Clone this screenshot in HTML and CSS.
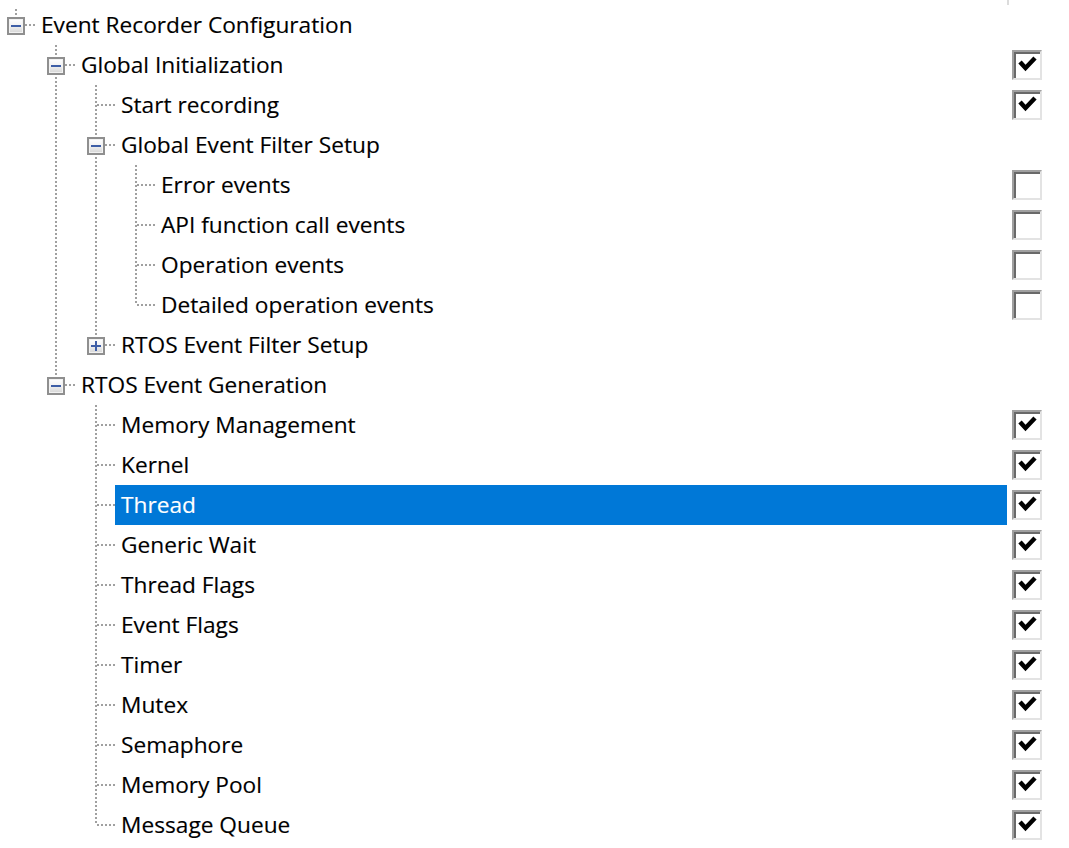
FILE: index.html
```html
<!DOCTYPE html>
<html>
<head>
<meta charset="utf-8">
<link rel="stylesheet" href="styles.css">
</head>
<body>
<div class="view">
  <div class="row top"><div class="tree"></div><div class="check"></div></div>

  <div class="row">
    <div class="tree">
      <div class="node up"><span class="exp minus"></span></div>
      <div class="label">Event Recorder Configuration</div>
    </div>
    <div class="check"></div>
  </div>

  <div class="row">
    <div class="tree">
      <div class="guide"></div>
      <div class="node mid"><span class="exp minus"></span></div>
      <div class="label">Global Initialization</div>
    </div>
    <div class="check"><span class="cb on"><svg viewBox="0 0 30 30"><path d="M8 12 L13.5 18 L23 8"/></svg></span></div>
  </div>

  <div class="row">
    <div class="tree">
      <div class="guide"></div><div class="guide line"></div>
      <div class="node mid"></div>
      <div class="label">Start recording</div>
    </div>
    <div class="check"><span class="cb on"><svg viewBox="0 0 30 30"><path d="M8 12 L13.5 18 L23 8"/></svg></span></div>
  </div>

  <div class="row">
    <div class="tree">
      <div class="guide"></div><div class="guide line"></div>
      <div class="node mid"><span class="exp minus"></span></div>
      <div class="label">Global Event Filter Setup</div>
    </div>
    <div class="check"></div>
  </div>

  <div class="row">
    <div class="tree">
      <div class="guide"></div><div class="guide line"></div><div class="guide line"></div>
      <div class="node mid"></div>
      <div class="label">Error events</div>
    </div>
    <div class="check"><span class="cb"></span></div>
  </div>

  <div class="row">
    <div class="tree">
      <div class="guide"></div><div class="guide line"></div><div class="guide line"></div>
      <div class="node mid"></div>
      <div class="label">API function call events</div>
    </div>
    <div class="check"><span class="cb"></span></div>
  </div>

  <div class="row">
    <div class="tree">
      <div class="guide"></div><div class="guide line"></div><div class="guide line"></div>
      <div class="node mid"></div>
      <div class="label">Operation events</div>
    </div>
    <div class="check"><span class="cb"></span></div>
  </div>

  <div class="row">
    <div class="tree">
      <div class="guide"></div><div class="guide line"></div><div class="guide line"></div>
      <div class="node last"></div>
      <div class="label">Detailed operation events</div>
    </div>
    <div class="check"><span class="cb"></span></div>
  </div>

  <div class="row">
    <div class="tree">
      <div class="guide"></div><div class="guide line"></div>
      <div class="node last"><span class="exp plus"></span></div>
      <div class="label">RTOS Event Filter Setup</div>
    </div>
    <div class="check"></div>
  </div>

  <div class="row">
    <div class="tree">
      <div class="guide"></div>
      <div class="node last"><span class="exp minus"></span></div>
      <div class="label">RTOS Event Generation</div>
    </div>
    <div class="check"></div>
  </div>

  <div class="row">
    <div class="tree">
      <div class="guide"></div><div class="guide"></div>
      <div class="node mid"></div>
      <div class="label">Memory Management</div>
    </div>
    <div class="check"><span class="cb on"><svg viewBox="0 0 30 30"><path d="M8 12 L13.5 18 L23 8"/></svg></span></div>
  </div>

  <div class="row">
    <div class="tree">
      <div class="guide"></div><div class="guide"></div>
      <div class="node mid"></div>
      <div class="label">Kernel</div>
    </div>
    <div class="check"><span class="cb on"><svg viewBox="0 0 30 30"><path d="M8 12 L13.5 18 L23 8"/></svg></span></div>
  </div>

  <div class="row">
    <div class="tree">
      <div class="guide"></div><div class="guide"></div>
      <div class="node mid"></div>
      <div class="label sel">Thread</div>
    </div>
    <div class="check"><span class="cb on"><svg viewBox="0 0 30 30"><path d="M8 12 L13.5 18 L23 8"/></svg></span></div>
  </div>

  <div class="row">
    <div class="tree">
      <div class="guide"></div><div class="guide"></div>
      <div class="node mid"></div>
      <div class="label">Generic Wait</div>
    </div>
    <div class="check"><span class="cb on"><svg viewBox="0 0 30 30"><path d="M8 12 L13.5 18 L23 8"/></svg></span></div>
  </div>

  <div class="row">
    <div class="tree">
      <div class="guide"></div><div class="guide"></div>
      <div class="node mid"></div>
      <div class="label">Thread Flags</div>
    </div>
    <div class="check"><span class="cb on"><svg viewBox="0 0 30 30"><path d="M8 12 L13.5 18 L23 8"/></svg></span></div>
  </div>

  <div class="row">
    <div class="tree">
      <div class="guide"></div><div class="guide"></div>
      <div class="node mid"></div>
      <div class="label">Event Flags</div>
    </div>
    <div class="check"><span class="cb on"><svg viewBox="0 0 30 30"><path d="M8 12 L13.5 18 L23 8"/></svg></span></div>
  </div>

  <div class="row">
    <div class="tree">
      <div class="guide"></div><div class="guide"></div>
      <div class="node mid"></div>
      <div class="label">Timer</div>
    </div>
    <div class="check"><span class="cb on"><svg viewBox="0 0 30 30"><path d="M8 12 L13.5 18 L23 8"/></svg></span></div>
  </div>

  <div class="row">
    <div class="tree">
      <div class="guide"></div><div class="guide"></div>
      <div class="node mid"></div>
      <div class="label">Mutex</div>
    </div>
    <div class="check"><span class="cb on"><svg viewBox="0 0 30 30"><path d="M8 12 L13.5 18 L23 8"/></svg></span></div>
  </div>

  <div class="row">
    <div class="tree">
      <div class="guide"></div><div class="guide"></div>
      <div class="node mid"></div>
      <div class="label">Semaphore</div>
    </div>
    <div class="check"><span class="cb on"><svg viewBox="0 0 30 30"><path d="M8 12 L13.5 18 L23 8"/></svg></span></div>
  </div>

  <div class="row">
    <div class="tree">
      <div class="guide"></div><div class="guide"></div>
      <div class="node mid"></div>
      <div class="label">Memory Pool</div>
    </div>
    <div class="check"><span class="cb on"><svg viewBox="0 0 30 30"><path d="M8 12 L13.5 18 L23 8"/></svg></span></div>
  </div>

  <div class="row">
    <div class="tree">
      <div class="guide"></div><div class="guide"></div>
      <div class="node last"></div>
      <div class="label">Message Queue</div>
    </div>
    <div class="check"><span class="cb on"><svg viewBox="0 0 30 30"><path d="M8 12 L13.5 18 L23 8"/></svg></span></div>
  </div>
</div>
</body>
</html>
```

FILE: styles.css
```css
html, body {
  margin: 0;
  padding: 0;
  background: #ffffff;
}

.view {
  width: 1069px;
  font-family: "Open Sans", "Noto Sans", "DejaVu Sans", sans-serif;
  font-size: 22.7px;
  color: #000000;
}

.row {
  display: flex;
  height: 40px;
}

.row.top {
  height: 5px;
}

.row.top .check {
  box-shadow: inset 2px 0 0 #dcdcdc;
}

.tree {
  width: 1007px;
  display: flex;
  flex: none;
}

.check {
  width: 62px;
  flex: none;
  display: flex;
  align-items: center;
}

.guide {
  width: 40px;
  flex: none;
}

.guide.line {
  background-image: repeating-linear-gradient(to bottom, #a0a0a0 0 2px, transparent 2px 4px);
  background-repeat: no-repeat;
  background-size: 2px 100%;
  background-position: 15px 0;
}

.node {
  width: 35px;
  flex: none;
  background-repeat: no-repeat;
  background-image:
    repeating-linear-gradient(to bottom, #a0a0a0 0 2px, transparent 2px 4px),
    repeating-linear-gradient(to right, #a0a0a0 0 2px, transparent 2px 4px);
  background-position: 15px 0, 17px 19px;
  background-size: 2px 100%, 18px 2px;
}

.node.last {
  background-size: 2px 20px, 18px 2px;
}

.node.up {
  background-position: 15px 4px, 17px 19px;
  background-size: 2px 12px, 18px 2px;
}

.exp {
  display: block;
  position: relative;
  box-sizing: border-box;
  width: 18px;
  height: 18px;
  margin: 12px 0 0 7px;
  border: 2px solid #8f8f8f;
  background: linear-gradient(to bottom, #ffffff 0%, #f4f4f4 40%, #d6d6d6 100%);
  box-shadow: inset 0 0 0 1px #f2f2f2;
}

.exp::before {
  content: "";
  position: absolute;
  left: 2px;
  top: 6px;
  width: 10px;
  height: 2px;
  background: #3e5ea6;
}

.exp.plus::after {
  content: "";
  position: absolute;
  left: 6px;
  top: 2px;
  width: 2px;
  height: 10px;
  background: #3e5ea6;
}

.label {
  flex: 1;
  height: 40px;
  line-height: 40px;
  padding-left: 6px;
  white-space: nowrap;
  -webkit-text-stroke: 0.15px #000000;
}

.label.sel {
  background: #0078d7;
  color: #ffffff;
  -webkit-text-stroke: 0.15px #ffffff;
}

.cb {
  display: block;
  box-sizing: border-box;
  width: 30px;
  height: 30px;
  margin-left: 5px;
  border: 2px solid;
  border-color: #a0a0a0 #e3e3e3 #e3e3e3 #a0a0a0;
  box-shadow: inset 2px 2px 0 #696969;
  background: #ffffff;
}

.cb svg {
  display: block;
  width: 30px;
  height: 30px;
  margin: -2px 0 0 -2px;
}

.cb svg path {
  fill: none;
  stroke: #000000;
  stroke-width: 4.5;
  stroke-linejoin: miter;
  stroke-linecap: butt;
}
```
